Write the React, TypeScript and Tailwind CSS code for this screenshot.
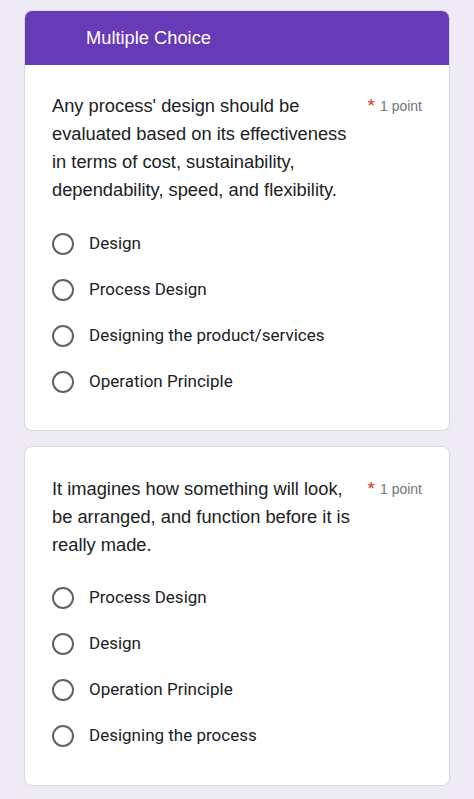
import React from 'react';

interface Question {
  text: string;
  options: string[];
}

const questions: Question[] = [
  {
    text: "Any process' design should be evaluated based on its effectiveness in terms of cost, sustainability, dependability, speed, and flexibility.",
    options: ['Design', 'Process Design', 'Designing the product/services', 'Operation Principle'],
  },
  {
    text: 'It imagines how something will look, be arranged, and function before it is really made.',
    options: ['Process Design', 'Design', 'Operation Principle', 'Designing the process'],
  },
];

const Radio: React.FC<{ label: string }> = ({ label }) => (
  <div className="flex items-center h-[46px]">
    <span className="w-[22px] h-[22px] rounded-full border-2 border-[#5f6368] ml-[27px] shrink-0" />
    <span className="ml-[15px] text-[17px] text-[#202124] font-['Roboto',sans-serif]">{label}</span>
  </div>
);

const QuestionBody: React.FC<{ q: Question }> = ({ q }) => (
  <div className="flex pl-[27px] pr-[27px]">
    <p className="w-[306px] text-[18.3px] leading-[28px] text-[#202124]">{q.text}</p>
    <div className="flex items-start ml-auto pt-[5px] whitespace-nowrap">
      <span className="text-[#d93025] text-[19px] leading-[17px] mr-[5px]">*</span>
      <span className="text-[14px] text-[#70757a] leading-[18px]">1 point</span>
    </div>
  </div>
);

export default function App() {
  return (
    <div className="min-h-[799px] bg-[#efebf6] px-[24px] pt-[10px] pb-[14px] font-['Liberation_Sans',Arial,sans-serif]">
      {/* Section header + first question */}
      <div className="rounded-[8px] bg-white border border-[#dcd8e4] overflow-hidden">
        <div className="h-[54px] bg-[#673ab7] flex items-center pl-[61px]">
          <span className="text-white text-[18.3px]">Multiple Choice</span>
        </div>
        <div className="pt-[27px] pb-[25px]">
          <QuestionBody q={questions[0]} />
          <div className="mt-[17px]">
            {questions[0].options.map((o) => (
              <Radio key={o} label={o} />
            ))}
          </div>
        </div>
      </div>

      {/* Second question */}
      <div className="mt-[15px] rounded-[8px] bg-white border border-[#dcd8e4] pt-[28px] pb-[26px]">
        <QuestionBody q={questions[1]} />
        <div className="mt-[16px]">
          {questions[1].options.map((o) => (
            <Radio key={o} label={o} />
          ))}
        </div>
      </div>
    </div>
  );
}
